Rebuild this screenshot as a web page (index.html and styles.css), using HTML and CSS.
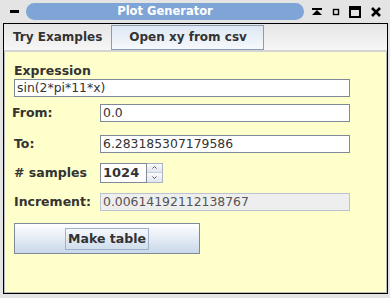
FILE: index.html
```html
<!DOCTYPE html>
<html lang="en">
<head>
    <meta charset="UTF-8">
    <title>Plot Generator</title>
    <link rel="stylesheet" href="styles.css">
</head>
<body>
    <div class="titlebar">
        <span class="menu-btn"></span>
        <div class="title-pill">Plot Generator</div>
        <div class="win-buttons">
            <svg width="12" height="10" viewBox="0 0 12 10"><rect x="1" y="1" width="10" height="2" fill="#000"/><polygon points="6,3 1,8 11,8" fill="#000"/></svg>
            <svg width="8" height="8" viewBox="0 0 8 8"><rect x="1.5" y="1.5" width="5" height="5" fill="none" stroke="#000" stroke-width="1.4"/></svg>
            <svg width="12" height="12" viewBox="0 0 12 12"><rect x="1" y="1" width="10" height="10" fill="none" stroke="#000" stroke-width="2"/><rect x="1" y="1" width="10" height="3" fill="#000"/></svg>
            <svg width="12" height="12" viewBox="0 0 12 12"><path d="M2 2 L10 10 M10 2 L2 10" stroke="#000" stroke-width="2.6"/></svg>
        </div>
    </div>

    <div class="frame">
        <div class="tabs">
            <div class="tab tab-selected">Try Examples</div>
            <div class="tab">Open xy from csv</div>
        </div>

        <div class="panel">
            <div class="label expr-label">Expression</div>
            <div class="field expr-field">sin(2*pi*11*x)</div>

            <div class="row">
                <div class="label label-shift">From:</div>
                <div class="field">0.0</div>
            </div>
            <div class="row">
                <div class="label">To:</div>
                <div class="field">6.283185307179586</div>
            </div>
            <div class="row row-short">
                <div class="label"># samples</div>
                <div class="spinner">
                    <div class="spinner-value">1024</div>
                    <div class="spinner-arrows">
                        <span class="arrow"><svg width="5" height="3" viewBox="0 0 5 3"><path d="M0.5 2.5 L2.5 0.5 L4.5 2.5" fill="none" stroke="#555" stroke-width="1"/></svg></span>
                        <span class="arrow"><svg width="5" height="3" viewBox="0 0 5 3"><path d="M0.5 0.5 L2.5 2.5 L4.5 0.5" fill="none" stroke="#555" stroke-width="1"/></svg></span>
                    </div>
                </div>
            </div>
            <div class="row">
                <div class="label">Increment:</div>
                <div class="field field-disabled">0.00614192112138767</div>
            </div>

            <button class="btn"><span class="btn-focus">Make table</span></button>
        </div>
    </div>
</body>
</html>
```

FILE: styles.css
```css
* {
    margin: 0;
    padding: 0;
    box-sizing: border-box;
}

body {
    width: 390px;
    height: 298px;
    background-color: #e4e4e4;
    font-family: 'DejaVu Sans', sans-serif;
    color: #333;
    overflow: hidden;
}

.titlebar {
    height: 23px;
    display: flex;
    align-items: center;
    padding: 0 6px 0 10px;
}

.menu-btn {
    width: 9px;
    height: 3px;
    background-color: #000;
    margin-right: 7px;
}

.title-pill {
    width: 278px;
    height: 17px;
    border-radius: 9px;
    background-color: #7fa5d6;
    color: #fff;
    font-weight: bold;
    font-size: 11.5px;
    line-height: 17px;
    text-align: center;
}

.win-buttons {
    display: flex;
    align-items: center;
    gap: 9px;
    margin-left: 7px;
}

.frame {
    margin: 0 2px 0 3px;
    height: 271px;
    border: 1px solid #000;
    background-color: #ffffcc;
    box-shadow: inset 1px 0 0 #bbb, inset -1px -1px 0 #bbb;
}

.tabs {
    height: 28px;
    display: flex;
    padding-top: 1px;
    background: linear-gradient(#e6e6e6, #f6f6f6);
    border-bottom: 2px solid #d4d4d4;
}

.tab {
    font-weight: bold;
    font-size: 12px;
    line-height: 23px;
    padding: 0 16px 0 17px;
    background: linear-gradient(#dde7f3, #f6f9fc);
    border: 1px solid #8a9cb3;
    height: 25px;
}

.tab-selected {
    background: transparent;
    border-color: transparent;
    padding: 0 8px;
}

.panel {
    padding: 11px 0 0 10px;
}

.label {
    font-weight: bold;
    font-size: 12.5px;
    width: 86px;
}

.label-shift {
    margin-left: -2px;
    width: 88px;
}

.expr-label {
    line-height: 16px;
}

.field {
    width: 250px;
    height: 18px;
    background-color: #fff;
    border: 1px solid #7f8a99;
    font-size: 12.4px;
    line-height: 16px;
    padding-left: 2px;
}

.expr-field {
    width: 336px;
}

.row {
    display: flex;
    align-items: center;
    height: 31px;
}

.row-short {
    height: 27px;
}

.field-disabled {
    background-color: #eeeeee;
    border-color: #b8c4cf;
    color: #555;
}

.spinner {
    display: flex;
    height: 20px;
}

.spinner-value {
    width: 47px;
    border: 1px solid #7f8a99;
    background-color: #fff;
    font-weight: bold;
    font-size: 13px;
    line-height: 18px;
    padding-left: 2px;
}

.spinner-arrows {
    width: 16px;
    display: flex;
    flex-direction: column;
    border: 1px solid #a8b4c0;
    border-left: none;
}

.arrow {
    flex: 1;
    display: flex;
    align-items: center;
    justify-content: center;
    background: linear-gradient(#fafafa, #dfe6ee);
}

.arrow + .arrow {
    border-top: 1px solid #c4ced8;
}

.btn {
    margin-top: 6px;
    width: 186px;
    height: 31px;
    border: 1px solid #7f8a99;
    background: linear-gradient(#ffffff, #c9d8ea);
    font-family: 'DejaVu Sans', sans-serif;
    font-weight: bold;
    font-size: 12.5px;
    color: #333;
    display: flex;
    align-items: center;
    justify-content: center;
}

.btn-focus {
    border: 1px solid #9db1c8;
    padding: 2px 2px;
    line-height: 16px;
}
```
